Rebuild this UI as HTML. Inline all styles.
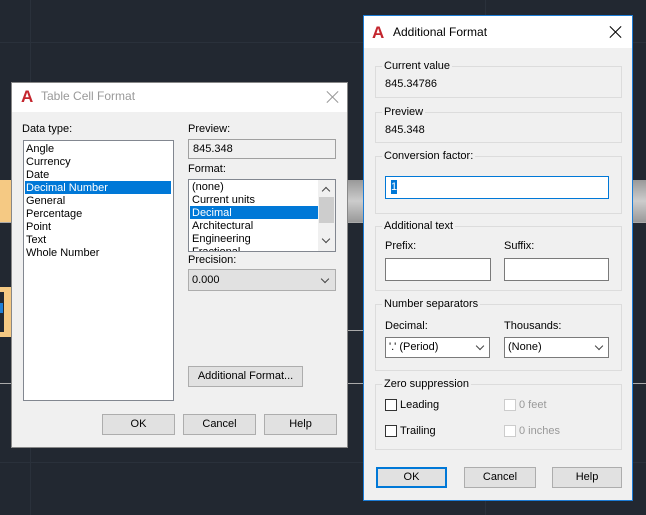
<!DOCTYPE html>
<html><head><style>
*{box-sizing:border-box;margin:0;padding:0}
body{width:646px;height:515px;overflow:hidden;background:#222831;font-family:"Liberation Sans",sans-serif;font-size:11px;color:#000;position:relative}
.a{position:absolute}
.t{position:absolute;white-space:nowrap;line-height:13px}
.grid{position:absolute;background:#2a313b}
.btn{position:absolute;background:#e1e1e1;border:1px solid #adadad;text-align:center;line-height:19px}
.grp{position:absolute;border:1px solid #dcdcdc}
.lbl{position:absolute;background:#f0f0f0;padding:0 2px;top:-7px;left:6px;line-height:13px;white-space:nowrap}
.inp{position:absolute;background:#fff;border:1px solid #7a7a7a}
.cb{position:absolute;width:12px;height:12px;border:1px solid #333;background:#fff}
.cbd{position:absolute;width:12px;height:12px;border:1px solid #ccc;background:#fff}
.chev{position:absolute;width:6px;height:6px;border-right:1px solid #444;border-bottom:1px solid #444;transform:rotate(45deg)}
.x{position:absolute;width:12px;height:12px}
.x:before,.x:after{content:"";position:absolute;left:5px;top:-2px;width:1px;height:16px;background:currentColor;transform:rotate(45deg)}
.x:after{transform:rotate(-45deg)}
</style></head><body>
<div class="grid" style="left:0;top:42px;width:646px;height:1px"></div>
<div class="grid" style="left:0;top:462px;width:646px;height:1px"></div>
<div class="grid" style="left:30px;top:0;width:1px;height:515px"></div>
<div class="grid" style="left:485px;top:0;width:1px;height:515px"></div>
<div class="a" style="left:0;top:180px;width:11px;height:42px;background:#f5c983"></div>
<div class="a" style="left:0;top:287px;width:11px;height:50px;background:#f5c983"></div>
<div class="a" style="left:0;top:292px;width:4px;height:40px;background:#222831"></div>
<div class="a" style="left:0;top:303px;width:3px;height:10px;background:#1e7fd8"></div>
<div class="a" style="left:347px;top:180px;width:16px;height:42px;background:linear-gradient(#999,#ccc,#999)"></div>
<div class="a" style="left:632px;top:180px;width:14px;height:42px;background:linear-gradient(#999,#ccc,#999)"></div>
<div class="a" style="left:0;top:222px;width:646px;height:1px;background:#aaa"></div>
<div class="a" style="left:0;top:383px;width:646px;height:1px;background:#aaa"></div>
<div class="a" style="left:347px;top:330px;width:16px;height:1px;background:#aaa"></div>

<!-- Left dialog -->
<div class="a" style="left:11px;top:82px;width:337px;height:366px;background:#f0f0f0;border:1px solid #888"></div>
<div class="a" style="left:12px;top:83px;width:335px;height:29px;background:#fff"></div>
<div class="t" style="left:21px;top:88px;font-size:17px;font-weight:bold;color:#c4262e;line-height:18px">A</div>
<div class="t" style="left:41px;top:90px;font-size:12px;color:#999">Table Cell Format</div>
<div class="x" style="left:327px;top:91px;color:#999"></div>
<div class="t" style="left:22px;top:123px">Data type:</div>
<div class="a" style="left:23px;top:140px;width:151px;height:261px;background:#fff;border:1px solid #828790"></div>
<div class="a" style="left:25px;top:181px;width:146px;height:13px;background:#0078d7"></div>
<div class="t" style="left:26px;top:143px;line-height:13px">Angle<br>Currency<br>Date<br><span style="color:#fff">Decimal Number</span><br>General<br>Percentage<br>Point<br>Text<br>Whole Number</div>
<div class="t" style="left:188px;top:123px">Preview:</div>
<div class="a" style="left:188px;top:139px;width:148px;height:20px;border:1px solid #a0a0a0;background:#f0f0f0"></div>
<div class="t" style="left:193px;top:143px">845.348</div>
<div class="t" style="left:188px;top:163px">Format:</div>
<div class="a" style="left:188px;top:179px;width:148px;height:73px;background:#fff;border:1px solid #828790;overflow:hidden">
<div class="a" style="left:1px;top:26px;width:128px;height:13px;background:#0078d7"></div>
<div class="t" style="left:3px;top:1px">(none)<br>Current units<br><span style="color:#fff">Decimal</span><br>Architectural<br>Engineering<br>Fractional</div>
<div class="a" style="left:129px;top:0;width:17px;height:71px;background:#f0f0f0"></div>
<div class="a" style="left:130px;top:17px;width:15px;height:26px;background:#cdcdcd"></div>
<div class="chev" style="left:134px;top:8px;transform:rotate(225deg)"></div>
<div class="chev" style="left:134px;top:56px"></div>
</div>
<div class="t" style="left:188px;top:254px">Precision:</div>
<div class="a" style="left:188px;top:269px;width:148px;height:22px;border:1px solid #adadad;background:#e1e1e1"></div>
<div class="t" style="left:192px;top:274px">0.000</div>
<div class="chev" style="left:322px;top:276px"></div>
<div class="btn" style="left:188px;top:366px;width:115px;height:21px">Additional Format...</div>
<div class="btn" style="left:102px;top:414px;width:73px;height:21px">OK</div>
<div class="btn" style="left:183px;top:414px;width:73px;height:21px">Cancel</div>
<div class="btn" style="left:264px;top:414px;width:73px;height:21px">Help</div>

<!-- Right dialog -->
<div class="a" style="left:363px;top:15px;width:270px;height:486px;background:#f0f0f0;border:1px solid #1c7cd5"></div>
<div class="a" style="left:364px;top:16px;width:268px;height:32px;background:#fff"></div>
<div class="t" style="left:372px;top:24px;font-size:17px;font-weight:bold;color:#c4262e;line-height:18px">A</div>
<div class="t" style="left:393px;top:26px;font-size:12px">Additional Format</div>
<div class="x" style="left:610px;top:26px;color:#000"></div>

<div class="grp" style="left:375px;top:66px;width:247px;height:32px"><span class="lbl">Current value</span></div>
<div class="t" style="left:385px;top:78px">845.34786</div>
<div class="grp" style="left:375px;top:112px;width:247px;height:31px"><span class="lbl">Preview</span></div>
<div class="t" style="left:385px;top:124px">845.348</div>
<div class="grp" style="left:375px;top:156px;width:247px;height:58px"><span class="lbl">Conversion factor:</span></div>
<div class="a" style="left:385px;top:176px;width:224px;height:23px;background:#fff;border:1px solid #0078d7"></div>
<div class="a" style="left:391px;top:180px;width:6px;height:14px;background:#0078d7"></div>
<div class="t" style="left:391px;top:181px;color:#fff">1</div>
<div class="grp" style="left:375px;top:226px;width:247px;height:65px"><span class="lbl">Additional text</span></div>
<div class="t" style="left:385px;top:240px">Prefix:</div>
<div class="t" style="left:504px;top:240px">Suffix:</div>
<div class="inp" style="left:385px;top:258px;width:106px;height:23px"></div>
<div class="inp" style="left:504px;top:258px;width:105px;height:23px"></div>
<div class="grp" style="left:375px;top:304px;width:247px;height:67px"><span class="lbl">Number separators</span></div>
<div class="t" style="left:385px;top:320px">Decimal:</div>
<div class="t" style="left:504px;top:320px">Thousands:</div>
<div class="inp" style="left:385px;top:337px;width:105px;height:21px"></div>
<div class="t" style="left:389px;top:341px">'.' (Period)</div>
<div class="chev" style="left:477px;top:343px"></div>
<div class="inp" style="left:504px;top:337px;width:105px;height:21px"></div>
<div class="t" style="left:508px;top:341px">(None)</div>
<div class="chev" style="left:596px;top:343px"></div>
<div class="grp" style="left:375px;top:384px;width:247px;height:66px"><span class="lbl">Zero suppression</span></div>
<div class="cb" style="left:385px;top:399px"></div>
<div class="t" style="left:400px;top:399px">Leading</div>
<div class="cb" style="left:385px;top:425px"></div>
<div class="t" style="left:400px;top:425px">Trailing</div>
<div class="cbd" style="left:504px;top:399px"></div>
<div class="t" style="left:519px;top:399px;color:#999">0 feet</div>
<div class="cbd" style="left:504px;top:425px"></div>
<div class="t" style="left:519px;top:425px;color:#999">0 inches</div>
<div class="btn" style="left:376px;top:467px;width:71px;height:21px;border:2px solid #0078d7;line-height:17px">OK</div>
<div class="btn" style="left:464px;top:467px;width:72px;height:21px">Cancel</div>
<div class="btn" style="left:552px;top:467px;width:70px;height:21px">Help</div>
</body></html>
